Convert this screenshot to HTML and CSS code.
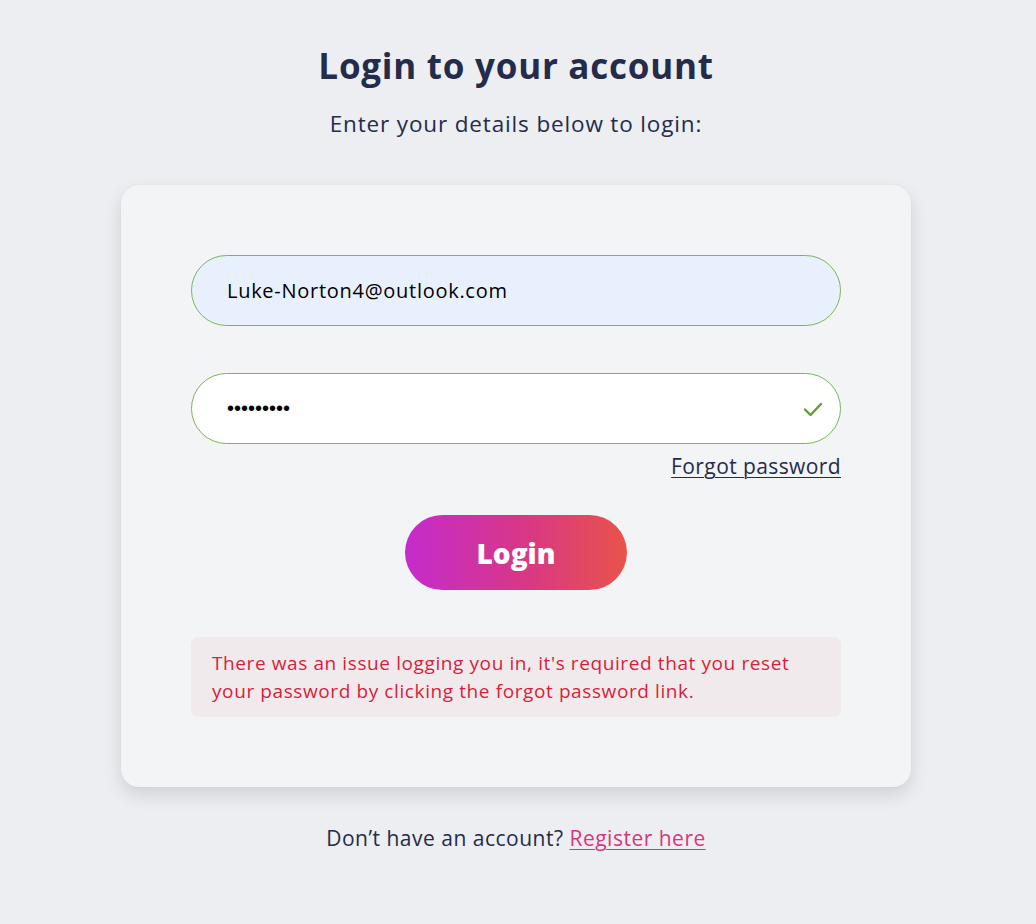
FILE: index.html
```html
<!DOCTYPE html>
<html lang="en">
<head>
<meta charset="utf-8">
<title>Login</title>
<link rel="stylesheet" href="styles.css">
</head>
<body>
<main class="page">
  <h1 class="title">Login to your account</h1>
  <p class="subtitle">Enter your details below to login:</p>
  <form class="card">
    <div class="field field-email">
      <input class="input input-autofill" type="email" value="Luke-Norton4@outlook.com">
    </div>
    <div class="field field-password">
      <input class="input input-password" type="password" value="password1">
      <svg class="check" width="20" height="16" viewBox="0 0 20 16" aria-hidden="true"><path d="M2 8.5 L7.5 14 L18 3" fill="none" stroke="#5aa02c" stroke-width="2.4" stroke-linecap="round" stroke-linejoin="round"/></svg>
    </div>
    <div class="forgot-row"><a class="forgot" href="#">Forgot password</a></div>
    <div class="btn-row"><button type="button" class="btn">Login</button></div>
    <div class="error">There was an issue logging you in, it's required that you reset your password by clicking the forgot password link.</div>
  </form>
  <p class="footer">Don’t have an account? <a class="register" href="#">Register here</a></p>
</main>
</body>
</html>
```
FILE: styles.css
```css
* { box-sizing: border-box; }
html, body { margin: 0; padding: 0; }
body {
  background: #eceef2;
  font-family: "Open Sans", "Liberation Sans", sans-serif;
  color: #252b4b;
}
.page {
  display: flex;
  flex-direction: column;
  align-items: center;
  padding: 42px 4px 0 0;
}
.title {
  margin: 0;
  font-size: 35px;
  font-weight: 700;
  line-height: 48px;
  letter-spacing: 0.75px;
  color: #252b4b;
}
.subtitle {
  margin: 19px 0 0;
  font-size: 22.5px;
  line-height: 30px;
  letter-spacing: 0.85px;
  color: #252b4b;
}
.card {
  margin-top: 46px;
  width: 790px;
  background: #f3f4f6;
  border-radius: 18px;
  box-shadow: 0 8px 18px rgba(0,0,0,0.12), 0 0 1px rgba(0,0,0,0.10);
  padding: 70px;
  display: flex;
  flex-direction: column;
}
.field { position: relative; }
.field-password { margin-top: 47px; }
.input {
  width: 100%;
  height: 71px;
  border: 1px solid #7ab55a;
  border-radius: 36px;
  background: #ffffff;
  padding: 0 35px;
  font-family: "Open Sans", "Liberation Sans", sans-serif;
  font-size: 20px;
  letter-spacing: 0.72px;
  color: #000;
  outline: none;
}
.input-autofill { background: #e8f0fe; }
.input-password {
  font-family: "Liberation Sans", sans-serif;
  letter-spacing: 0;
}
.check {
  position: absolute;
  right: 18px;
  top: 28px;
}
.forgot-row {
  display: flex;
  justify-content: flex-end;
  margin-top: 9px;
}
.forgot {
  font-size: 21px;
  line-height: 26px;
  letter-spacing: 0.4px;
  color: #252b4b;
  text-decoration: underline;
  text-underline-offset: 3px;
  text-decoration-thickness: 1px;
}
.btn-row {
  display: flex;
  justify-content: center;
  margin-top: 36px;
}
.btn {
  width: 222px;
  height: 75px;
  border: none;
  border-radius: 38px;
  background: linear-gradient(90deg, #c52bcd 0%, #d83884 55%, #e9534a 100%);
  color: #fff;
  font-family: "Open Sans", "Liberation Sans", sans-serif;
  font-size: 28px;
  font-weight: 800;
}
.error {
  margin-top: 47px;
  background: #f1eaec;
  border-radius: 7px;
  padding: 12px 40px 12px 21px;
  color: #d71e3b;
  font-size: 19px;
  line-height: 28px;
  letter-spacing: 0.6px;
}
.footer {
  margin: 37px 0 0;
  font-size: 21px;
  line-height: 28px;
  letter-spacing: 0.5px;
  color: #252b4b;
}
.register {
  color: #d8377c;
  text-decoration: underline;
  text-underline-offset: 3px;
  text-decoration-thickness: 1px;
}
```
